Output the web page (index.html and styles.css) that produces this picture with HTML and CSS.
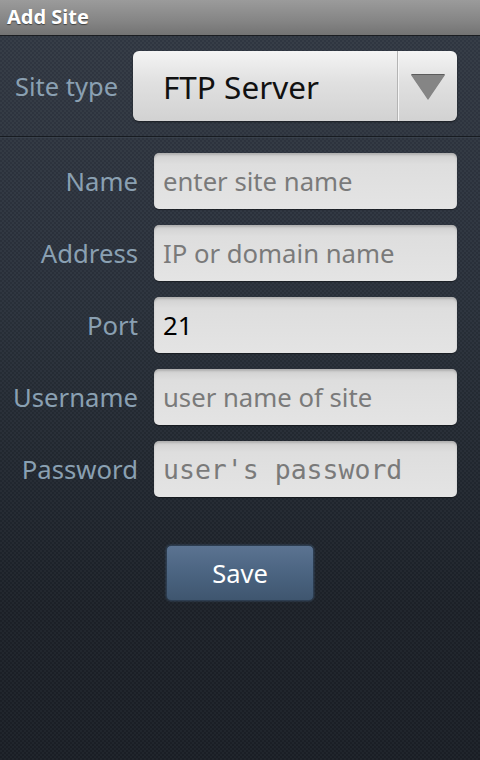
FILE: index.html
```html
<!DOCTYPE html>
<html lang="en">
  <head>
    <meta charset="UTF-8" />
    <meta name="viewport" content="width=device-width, initial-scale=1.0" />
    <title>Add Site</title>

    <link rel="stylesheet" href="styles.css">
  </head>
  <body>
    <div class="titlebar">Add Site</div>

    <div class="type-row">
      <label class="type-label">Site type</label>
      <div class="spinner">
        <span class="spinner-text">FTP Server</span>
        <span class="spinner-arrow"><span class="triangle"></span></span>
      </div>
    </div>

    <div class="divider"></div>

    <form class="site-form">
      <div class="form-row">
        <label for="name">Name</label>
        <input id="name" class="field" type="text" placeholder="enter site name" />
      </div>
      <div class="form-row">
        <label for="address">Address</label>
        <input id="address" class="field" type="text" placeholder="IP or domain name" />
      </div>
      <div class="form-row">
        <label for="port">Port</label>
        <input id="port" class="field" type="text" value="21" />
      </div>
      <div class="form-row">
        <label for="username">Username</label>
        <input id="username" class="field" type="text" placeholder="user name of site" />
      </div>
      <div class="form-row">
        <label for="password">Password</label>
        <input id="password" class="field field-mono" type="password" placeholder="user's password" />
      </div>

      <button type="button" class="save-btn">Save</button>
    </form>
  </body>
</html>
```

FILE: styles.css
```css
* {
  box-sizing: border-box;
}

body {
  margin: 0;
  width: 480px;
  height: 760px;
  overflow: hidden;
  font-family: 'Noto Sans', 'DejaVu Sans', sans-serif;
  background-color: #262c35;
  background-image:
    repeating-conic-gradient(rgba(255, 255, 255, 0.025) 0 25%, rgba(0, 0, 0, 0.05) 0 50%),
    linear-gradient(to bottom, #333a45 0%, #2a313b 40%, #1d2229 80%, #1b2027 100%);
  background-size: 4px 4px, 100% 100%;
}

.titlebar {
  height: 36px;
  padding: 3px 0 0 7px;
  font-size: 20px;
  font-weight: bold;
  color: #fff;
  text-shadow: 0 1px 1px rgba(0, 0, 0, 0.5);
  background: linear-gradient(to bottom, #9b9b9b, #858585 60%, #737373);
  border-bottom: 1px solid #1a1d21;
}

.type-row {
  display: flex;
  align-items: center;
  margin-top: 15px;
  padding: 0 23px 0 15px;
}

.type-label {
  font-size: 25.5px;
  color: #8aa0b2;
  width: 118px;
}

.spinner {
  flex: 1;
  display: flex;
  height: 70px;
  border-radius: 6px;
  background: linear-gradient(to bottom, #f4f4f4, #e0e0e0 45%, #d2d2d2);
  box-shadow: 0 1px 2px rgba(0, 0, 0, 0.5);
}

.spinner-text {
  flex: 1;
  display: flex;
  align-items: center;
  padding-left: 30px;
  font-size: 31.5px;
  color: #111;
}

.spinner-arrow {
  width: 60px;
  display: flex;
  align-items: center;
  justify-content: center;
  border-left: 1px solid #b4b4b4;
  box-shadow: inset 1px 0 0 #f6f6f6;
}

.triangle {
  width: 0;
  height: 0;
  border-left: 17px solid transparent;
  border-right: 17px solid transparent;
  border-top: 25px solid #858585;
  filter: drop-shadow(0 -1px 0 #5c5c5c);
  margin-top: 2px;
}

.divider {
  margin-top: 15px;
  height: 2px;
  border-top: 1px solid #171b20;
  border-bottom: 1px solid #39414c;
}

.site-form {
  display: flex;
  flex-direction: column;
  gap: 16px;
  padding: 15px 23px 0 0;
}

.form-row {
  display: flex;
  align-items: center;
  gap: 16px;
}

.form-row label {
  width: 138px;
  text-align: right;
  font-size: 25.7px;
  color: #8aa0b2;
}

.field {
  flex: 1;
  height: 56px;
  min-width: 0;
  padding: 0 9px;
  border: none;
  border-radius: 5px;
  outline: none;
  font-family: 'Noto Sans', 'DejaVu Sans', sans-serif;
  font-size: 25.7px;
  color: #000;
  background: linear-gradient(to bottom, #cfcfcf, #dedede 20%, #e4e4e4);
  box-shadow: inset 0 2px 2px rgba(0, 0, 0, 0.15), 0 1px 1px rgba(0, 0, 0, 0.4);
}

.field::placeholder {
  color: #7a7a7a;
}

.field-mono {
  font-family: 'DejaVu Sans Mono', monospace;
  font-size: 26.5px;
}

.save-btn {
  align-self: center;
  margin: 32px 0 0 23px;
  width: 148px;
  height: 56px;
  border: 1px solid #2d3d50;
  border-radius: 5px;
  font-family: 'Noto Sans', 'DejaVu Sans', sans-serif;
  font-size: 25.5px;
  color: #fff;
  background: linear-gradient(to bottom, #5b7391, #4b6481 50%, #3f566f);
  box-shadow: 0 0 2px rgba(90, 130, 170, 0.6);
  cursor: pointer;
}
```
